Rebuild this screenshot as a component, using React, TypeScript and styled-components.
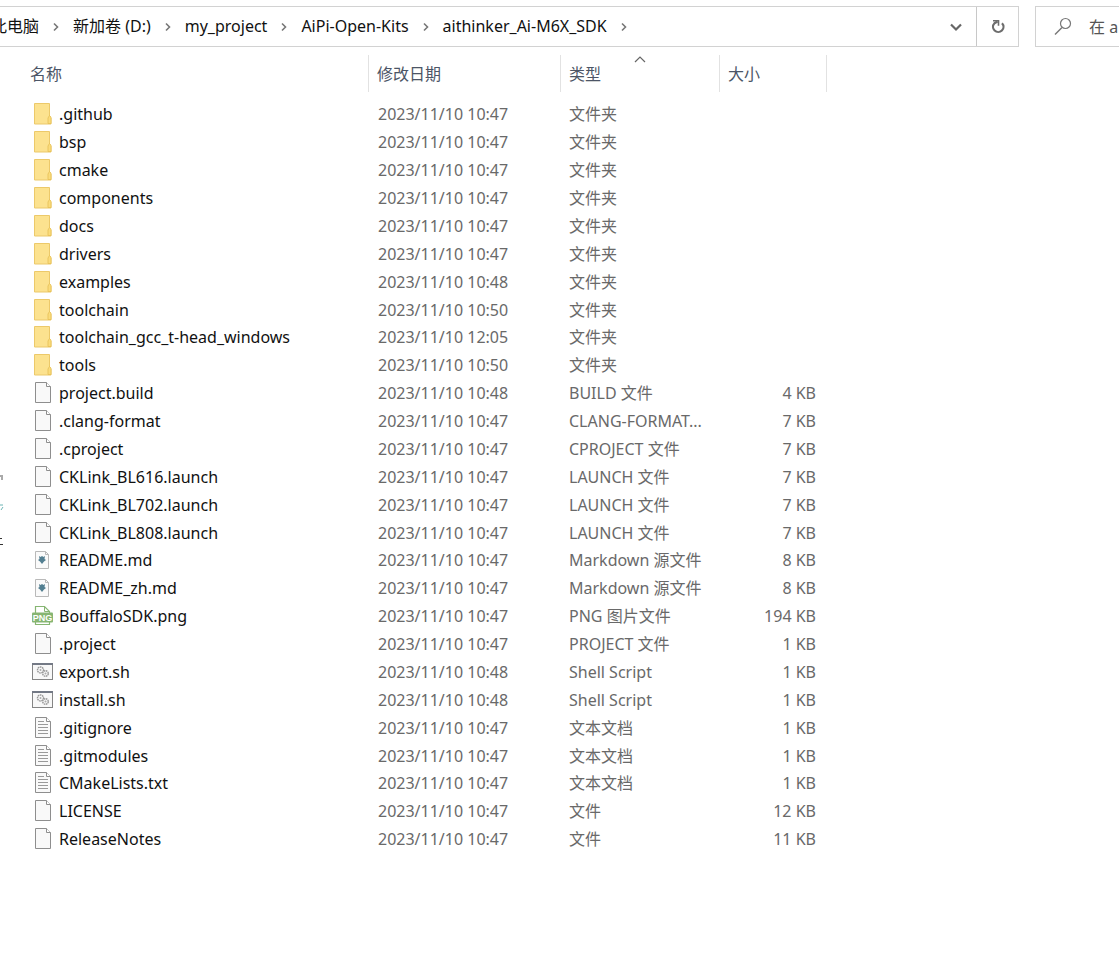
import React from 'react';
import styled, { createGlobalStyle } from 'styled-components';

const GlobalStyle = createGlobalStyle`
  * { box-sizing: border-box; }
  body {
    margin: 0;
    background: #fff;
    color: #111;
    font: 16px/20px "Noto Sans", "Noto Sans CJK SC", sans-serif;
  }
  button, input { font: inherit; color: inherit; }
`;

const Page = styled.div`
  min-height: 100vh;
  padding-top: 6px;
  overflow: hidden;
`;

const Toolbar = styled.header`
  display: flex;
  gap: 16px;
  height: 41px;
`;

const AddressBar = styled.div`
  display: flex;
  flex: 1;
  min-width: 0;
  border: 1px solid #d2d2d2;
  border-left: 0;
`;

const Crumbs = styled.nav`
  display: flex;
  align-items: center;
  flex: 1;
  min-width: 0;
  margin-left: -9px;
  padding-bottom: 2px;
  white-space: nowrap;
`;

const Crumb = styled.a`
  color: #111;
  text-decoration: none;
`;

const CrumbArrow = styled.svg`
  flex: none;
  width: 8px;
  height: 10px;
  margin: 2px 13px 0;
`;

const ToolButton = styled.button<{ $divided?: boolean }>`
  display: grid;
  place-items: center;
  width: ${(p) => (p.$divided ? 42 : 40)}px;
  padding: 0;
  border: 0;
  border-left: ${(p) => (p.$divided ? '1px solid #c8c8c8' : '0')};
  background: none;
`;

const SearchBox = styled.label`
  display: flex;
  align-items: center;
  flex: none;
  width: 84px;
  padding-left: 17px;
  gap: 16px;
  overflow: hidden;
  border: 1px solid #d2d2d2;
  border-right: 0;
  svg { flex: none; }
`;

const SearchInput = styled.input`
  flex: none;
  width: 260px;
  padding: 0;
  border: 0;
  outline: 0;
  background: none;
  &::placeholder { color: #555; opacity: 1; }
`;

const Body = styled.div`
  display: flex;
  padding-top: 8px;
`;

const TreeEdge = styled.aside`
  flex: none;
  width: 4px;
  padding-top: 416px;
  overflow: hidden;
`;

const FileTable = styled.table`
  table-layout: fixed;
  border-collapse: separate;
  border-spacing: 0;
  width: 823px;
  color: #696969;
`;

const ColName = styled.col` width: 365px; `;
const ColDate = styled.col` width: 192px; `;
const ColType = styled.col` width: 159px; `;
const ColSize = styled.col` width: 107px; `;

const HeadCell = styled.th<{ $first?: boolean }>`
  position: relative;
  height: 37px;
  padding: 0 0 0 ${(p) => (p.$first ? 26 : 8)}px;
  border-right: 1px solid #e2e2e2;
  color: #4c5566;
  font-weight: 400;
  text-align: left;
`;

const SortMark = styled.svg`
  position: absolute;
  top: 1px;
  left: 50%;
  width: 12px;
  height: 7px;
  margin-left: -6px;
`;

const HeadGap = styled.tr`
  height: 8px;
`;

/* Rows are a little under 28px tall, so every eighth one drops a pixel. */
const Row = styled.tr`
  height: 28px;
  &:nth-child(8n) { height: 27px; }
`;

const Cell = styled.td<{ $right?: boolean; $date?: boolean }>`
  padding: 0 ${(p) => (p.$right ? 11 : 8)}px 0 ${(p) => (p.$date ? 9 : 8)}px;
  overflow: hidden;
  text-align: ${(p) => (p.$right ? 'right' : 'left')};
  text-overflow: ellipsis;
  white-space: nowrap;
`;

const NameCell = styled.td`
  padding: 0 0 0 28px;
`;

const FileName = styled.div`
  display: flex;
  align-items: center;
  gap: 5px;
  color: #111;
  white-space: nowrap;
  svg { flex: none; }
`;

type Kind = 'folder' | 'file' | 'md' | 'png' | 'sh' | 'text';

const Sheet = () => (
  <>
    <path d="M3.500 .5h11l4 4v16h-15z" fill="#f9f9f9" stroke="#8e8e8e" />
    <path d="M14.500 .5v4h4" fill="#fff" stroke="#8e8e8e" />
  </>
);

function FileIcon({ kind }: { kind: Kind }) {
  return (
    <svg width="22" height="22" viewBox="0 0 22 22" aria-hidden="true">
      {kind === 'folder' && (
        <>
          <path d="M2.500 .5h15v13l1.500 1.500v6H2.500z" fill="#fce28f" stroke="#ecc96a" />
          <path d="M16 20.500v-5.500l1.500-2.500 1.500 1.500v6.500z" fill="#fbdc7c" stroke="#e6bf55" strokeWidth=".8" />
        </>
      )}
      {kind === 'file' && <Sheet />}
      {kind === 'text' && (
        <>
          <Sheet />
          <path d="M6 4.500h6M6 7.500h10M6 10.500h10M6 13.500h10M6 16.500h10" stroke="#999" />
        </>
      )}
      {kind === 'md' && (
        <>
          <path d="M3.500 2.500h10l3 3v14h-13z" fill="#fafafa" stroke="#b9b9b9" />
          <path d="M13.500 2.500v3h3" fill="none" stroke="#b9b9b9" />
          <path d="M7 7l1.500 1L10 7l1.500 1L13 7l-.5 3 1.500 1-2 1.500L10 15l-2-2.500L6 11l1.500-1z" fill="#537f91" />
        </>
      )}
      {kind === 'png' && (
        <>
          <path d="M3.500 8V1.500h9l5 5V8M3.500 17v2.500h14V17" fill="none" stroke="#86b572" strokeWidth="1.200" />
          <path d="M12.500 1.500v5h5" fill="none" stroke="#86b572" />
          <rect x="0" y="7.500" width="21" height="10" rx="1" fill="#86b572" />
          <text x="10.500" y="15.800" textAnchor="middle" fontFamily="Liberation Sans" fontWeight="700" fontSize="9" fill="#fff">PNG</text>
        </>
      )}
      {kind === 'sh' && (
        <>
          <rect x=".5" y="2.500" width="20" height="16" fill="#f8f8f8" stroke="#858585" />
          <path d="M0 3h21" stroke="#737985" strokeWidth="2" />
          <circle cx="8.500" cy="9" r="3" fill="none" stroke="#979797" strokeWidth="1.400" strokeDasharray="1.600 .6" />
          <circle cx="8.500" cy="9" r="1" fill="#aaa" />
          <circle cx="13.500" cy="12.500" r="2.800" fill="#f8f8f8" stroke="#979797" strokeWidth="1.400" strokeDasharray="1.600 .6" />
          <circle cx="13.500" cy="12.500" r="1" fill="#aaa" />
        </>
      )}
    </svg>
  );
}

const day = '2023/11/10 ';
const files: [Kind, string, string, string, string][] = [
  ['folder', '.github', '10:47', '文件夹', ''],
  ['folder', 'bsp', '10:47', '文件夹', ''],
  ['folder', 'cmake', '10:47', '文件夹', ''],
  ['folder', 'components', '10:47', '文件夹', ''],
  ['folder', 'docs', '10:47', '文件夹', ''],
  ['folder', 'drivers', '10:47', '文件夹', ''],
  ['folder', 'examples', '10:48', '文件夹', ''],
  ['folder', 'toolchain', '10:50', '文件夹', ''],
  ['folder', 'toolchain_gcc_t-head_windows', '12:05', '文件夹', ''],
  ['folder', 'tools', '10:50', '文件夹', ''],
  ['file', 'project.build', '10:48', 'BUILD 文件', '4 KB'],
  ['file', '.clang-format', '10:47', 'CLANG-FORMAT...', '7 KB'],
  ['file', '.cproject', '10:47', 'CPROJECT 文件', '7 KB'],
  ['file', 'CKLink_BL616.launch', '10:47', 'LAUNCH 文件', '7 KB'],
  ['file', 'CKLink_BL702.launch', '10:47', 'LAUNCH 文件', '7 KB'],
  ['file', 'CKLink_BL808.launch', '10:47', 'LAUNCH 文件', '7 KB'],
  ['md', 'README.md', '10:47', 'Markdown 源文件', '8 KB'],
  ['md', 'README_zh.md', '10:47', 'Markdown 源文件', '8 KB'],
  ['png', 'BouffaloSDK.png', '10:47', 'PNG 图片文件', '194 KB'],
  ['file', '.project', '10:47', 'PROJECT 文件', '1 KB'],
  ['sh', 'export.sh', '10:48', 'Shell Script', '1 KB'],
  ['sh', 'install.sh', '10:48', 'Shell Script', '1 KB'],
  ['text', '.gitignore', '10:47', '文本文档', '1 KB'],
  ['text', '.gitmodules', '10:47', '文本文档', '1 KB'],
  ['text', 'CMakeLists.txt', '10:47', '文本文档', '1 KB'],
  ['file', 'LICENSE', '10:47', '文件', '12 KB'],
  ['file', 'ReleaseNotes', '10:47', '文件', '11 KB'],
];

const crumbs = ['此电脑', '新加卷 (D:)', 'my_project', 'AiPi-Open-Kits', 'aithinker_Ai-M6X_SDK'];

export default function App() {
  return (
    <Page>
      <GlobalStyle />
      <Toolbar>
        <AddressBar>
          <Crumbs aria-label="路径">
            {crumbs.map((name) => (
              <React.Fragment key={name}>
                <Crumb href="#">{name}</Crumb>
                <CrumbArrow viewBox="0 0 8 10" aria-hidden="true">
                  <path d="M2 1.500 5.500 5 2 8.500" fill="none" stroke="#777" strokeWidth="1.600" />
                </CrumbArrow>
              </React.Fragment>
            ))}
          </Crumbs>
          <ToolButton aria-label="历史记录">
            <svg width="14" height="10" viewBox="0 0 14 10">
              <path d="M2 2.500 7 7.500l5-5" fill="none" stroke="#666" strokeWidth="2.200" />
            </svg>
          </ToolButton>
          <ToolButton $divided aria-label="刷新">
            <svg width="16" height="16" viewBox="0 0 16 16">
              <path d="M12 4.200A5.200 5.200 0 1 1 4.500 4.200L7.500 2.500" fill="none" stroke="#6c6c6c" strokeWidth="2.200" />
              <path d="M3 1.800h5.500v5" fill="none" stroke="#6c6c6c" strokeWidth="1.600" />
            </svg>
          </ToolButton>
        </AddressBar>
        <SearchBox>
          <svg width="20" height="20" viewBox="0 0 20 20" aria-hidden="true">
            <circle cx="12.500" cy="6.500" r="5" fill="none" stroke="#777" strokeWidth="1.200" />
            <path d="M9 10.500 2 17.500" stroke="#777" strokeWidth="1.400" />
          </svg>
          <SearchInput aria-label="搜索" placeholder="在 aithinker_Ai-M6X_SDK 中搜索" />
        </SearchBox>
      </Toolbar>
      <Body>
        <TreeEdge aria-hidden="true">
          <svg width="4" height="80" viewBox="0 0 4 80">
            <path d="M0 5h1M2 4v5" stroke="#555" />
            <path d="M0 34h3M1 39l2-3" stroke="#6cb4b4" />
            <path d="M0 67.500h2M0 73.500h3" stroke="#333" />
          </svg>
        </TreeEdge>
        <FileTable>
          <colgroup>
            <ColName />
            <ColDate />
            <ColType />
            <ColSize />
          </colgroup>
          <thead>
            <tr>
              <HeadCell $first>名称</HeadCell>
              <HeadCell>修改日期</HeadCell>
              <HeadCell aria-sort="ascending">
                类型
                <SortMark viewBox="0 0 12 7" aria-hidden="true">
                  <path d="M1 6l5-5 5 5" fill="none" stroke="#666" strokeWidth="1.200" />
                </SortMark>
              </HeadCell>
              <HeadCell>大小</HeadCell>
            </tr>
            <HeadGap />
          </thead>
          <tbody>
            {files.map(([kind, name, time, type, size]) => (
              <Row key={name}>
                <NameCell>
                  <FileName>
                    <FileIcon kind={kind} />
                    {name}
                  </FileName>
                </NameCell>
                <Cell $date>{day + time}</Cell>
                <Cell>{type}</Cell>
                <Cell $right>{size}</Cell>
              </Row>
            ))}
          </tbody>
        </FileTable>
      </Body>
    </Page>
  );
}
